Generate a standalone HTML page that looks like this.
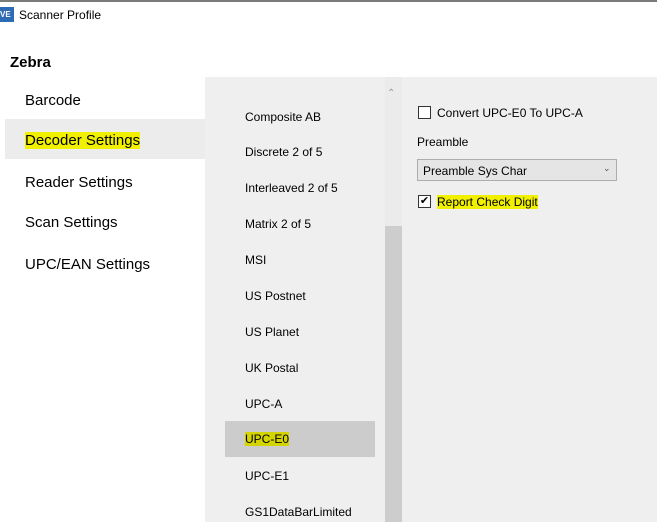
<!DOCTYPE html>
<html><head><style>
body{margin:0;width:657px;height:522px;background:#fff;font-family:"Liberation Sans",sans-serif;position:relative;overflow:hidden;color:#000}
.a{position:absolute;white-space:nowrap}
.hl{background:#f0f000}
.nav{font-size:15px;left:25px}
.li{font-size:12px;left:245px}
</style></head><body>
<div class="a" style="left:0;top:0;width:657px;height:2px;background:#7a7a7a"></div>
<div class="a" style="left:0;top:7px;width:14px;height:15px;background:#2e6bb5;color:#fff;font-size:8px;line-height:15px;font-weight:bold">VE</div>
<div class="a" style="left:19px;top:8px;font-size:12px">Scanner Profile</div>
<div class="a" style="left:10px;top:54px;font-size:15px;font-weight:bold">Zebra</div>
<div class="a" style="left:205px;top:77px;width:452px;height:445px;background:#efefef"></div>
<div class="a" style="left:5px;top:119px;width:200px;height:40px;background:#ececec"></div>
<div class="a nav" style="top:92px">Barcode</div>
<div class="a nav" style="top:132px"><span class="hl">Decoder Settings</span></div>
<div class="a nav" style="top:174px">Reader Settings</div>
<div class="a nav" style="top:214px">Scan Settings</div>
<div class="a nav" style="top:256px">UPC/EAN Settings</div>
<div class="a" style="left:385px;top:77px;width:17px;height:445px;background:#ebebeb"></div>
<div class="a" style="left:385px;top:226px;width:17px;height:296px;background:#cdcdcd"></div>
<div class="a" style="left:387px;top:88px;font-size:10px;color:#999">&#8963;</div>
<div class="a" style="left:225px;top:421px;width:150px;height:36px;background:#cccccc"></div>
<div class="a li" style="top:110px">Composite AB</div>
<div class="a li" style="top:145px">Discrete 2 of 5</div>
<div class="a li" style="top:181px">Interleaved 2 of 5</div>
<div class="a li" style="top:217px">Matrix 2 of 5</div>
<div class="a li" style="top:253px">MSI</div>
<div class="a li" style="top:289px">US Postnet</div>
<div class="a li" style="top:325px">US Planet</div>
<div class="a li" style="top:361px">UK Postal</div>
<div class="a li" style="top:397px">UPC-A</div>
<div class="a li" style="top:432px"><span style="background:#d4d400">UPC-E0</span></div>
<div class="a li" style="top:469px">UPC-E1</div>
<div class="a li" style="top:505px">GS1DataBarLimited</div>
<div class="a" style="left:418px;top:106px;width:11px;height:11px;border:1px solid #333;background:#fff"></div>
<div class="a" style="left:437px;top:106px;font-size:12px">Convert UPC-E0 To UPC-A</div>
<div class="a" style="left:417px;top:135px;font-size:12px">Preamble</div>
<div class="a" style="left:417px;top:159px;width:198px;height:20px;border:1px solid #adadad;background:#e5e5e5"></div>
<div class="a" style="left:423px;top:164px;font-size:12px">Preamble Sys Char</div>
<div class="a" style="left:603px;top:163px;font-size:9px;color:#555">&#8964;</div>
<div class="a" style="left:418px;top:195px;width:11px;height:11px;border:1px solid #333;background:#fff;font-size:11px;line-height:11px;text-align:center">&#10004;</div>
<div class="a" style="left:437px;top:195px;font-size:12px"><span class="hl">Report Check Digit</span></div>
</body></html>
